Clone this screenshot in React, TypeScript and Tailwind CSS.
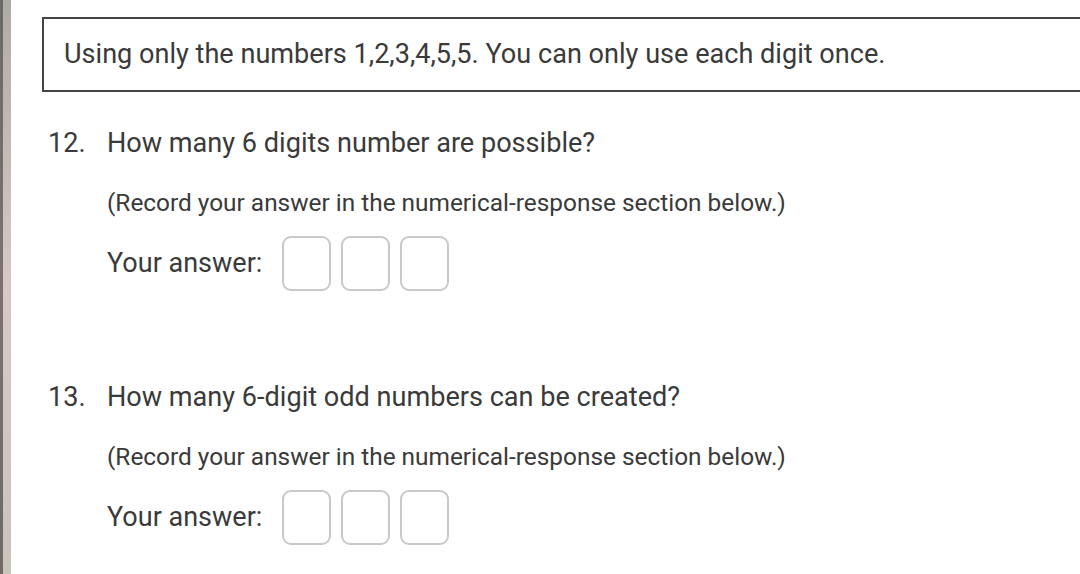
import React from "react";

function Boxes() {
  return (
    <div className="flex gap-[10px]">
      {[0, 1, 2].map((i) => (
        <div
          key={i}
          className="w-[49px] h-[55px] rounded-[9px] border-2 border-[#c9c9c9] bg-white"
        />
      ))}
    </div>
  );
}

function Question({ num, text }: { num: string; text: string }) {
  return (
    <div className="flex flex-col">
      <div className="flex items-center h-[32px]">
        <span className="w-[65px] pl-[6px]">{num}</span>
        <span>{text}</span>
      </div>
      <div className="pl-[65px] mt-[28px] h-[32px] flex items-center text-[24.4px] text-[#3a3a3a]">
        (Record your answer in the numerical-response section below.)
      </div>
      <div className="pl-[65px] mt-[17px] flex items-center">
        <span className="text-[27px] w-[175px] text-[#3a3a3a]">Your answer:</span>
        <Boxes />
      </div>
    </div>
  );
}

export default function App() {
  return (
    <div
      className="w-[1080px] h-[574px] bg-white flex overflow-hidden text-[#3a3a3a] text-[27.1px]"
      style={{ fontFamily: "Roboto, 'Liberation Sans', sans-serif" }}
    >
      <div className="w-[3px] h-full bg-gradient-to-b from-[#6b6a66] via-[#7a7270] to-[#6e6a64]" />
      <div className="w-[8px] h-full bg-gradient-to-b from-[#afaca4] via-[#d7c9c4] to-[#c9c4bc]" />
      <div className="flex-1 flex flex-col pl-[31px] pt-[17px]">
        <div className="h-[75px] border-2 border-r-0 border-[#444] flex items-center pl-[20px] -mr-[2px]">
          Using only the numbers 1,2,3,4,5,5. You can only use each digit once.
        </div>
        <div className="mt-[35px]">
          <Question num="12." text="How many 6 digits number are possible?" />
        </div>
        <div className="mt-[90px]">
          <Question num="13." text="How many 6-digit odd numbers can be created?" />
        </div>
      </div>
    </div>
  );
}
